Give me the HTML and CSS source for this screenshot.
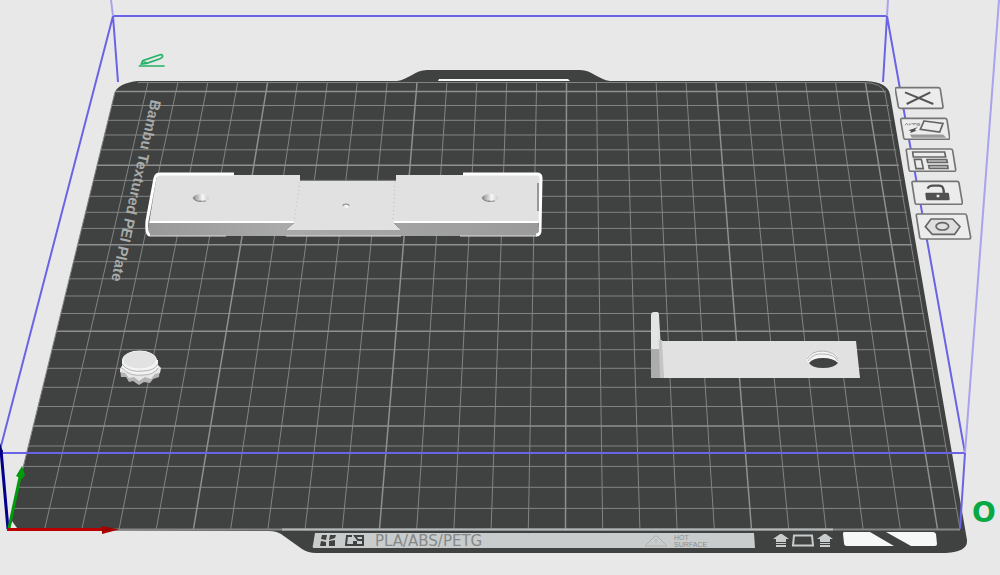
FILE: index.html
```html
<!DOCTYPE html>
<html lang="en">
<head>
    <meta charset="UTF-8">
    <meta name="viewport" content="width=device-width, initial-scale=1.0">
    <title>Build Plate</title>
    <link rel="stylesheet" href="styles.css">
</head>
<body>
    <main class="scene">
        <svg class="view" viewBox="0 0 1000 575" role="img" aria-label="Build plate with parts">
            <defs>
                <clipPath id="gridArea"><path d="M8 530L115 92Q119 83 136 82H864Q884 83 887 94L960 530Z"/></clipPath>
                <linearGradient id="front" x1="0" x2="1">
                    <stop offset="0" stop-color="#999"/>
                    <stop offset=".35" stop-color="#aaa"/>
                    <stop offset="1" stop-color="#9b9b9b"/>
                </linearGradient>
                <linearGradient id="hole" x1="0" x2="1">
                    <stop offset="0" stop-color="#888"/>
                    <stop offset=".6" stop-color="#f8f8f8"/>
                    <stop offset="1" stop-color="#ccc"/>
                </linearGradient>
            </defs>

            <!-- plate -->
            <path class="plate" d="M8 530L115 92Q119 83 138 81H397C408 80 415 70 427 70H580C592 70 599 80 610 81H866Q887 82 890 94L967 540Q968 552 946 553H316Q308 553 302 549L281 534Q276 531 269 531Z"/>
            <path class="cutout" d="M439 79H568L570 81H438Z"/>

            <!-- grid -->
            <g clip-path="url(#gridArea)">
                <path class="grid" d="M147.9 83L44.7 529M177.8 83L81.9 529M207.7 83L119.1 529M237.6 83L156.3 529M297.4 83L230.7 529M327.3 83L267.9 529M357.2 83L305.1 529M387.1 83L342.3 529M446.9 83L416.7 529M476.8 83L453.9 529M506.7 83L491.1 529M536.6 83L528.3 529M596.4 83L602.7 529M626.3 83L639.9 529M656.2 83L677.1 529M686.1 83L714.3 529M745.9 83L788.7 529M775.8 83L825.9 529M805.7 83L863.1 529M835.6 83L900.3 529"/>
                <path class="grid" d="M0 105.5H1000M0 120.3H1000M0 135H1000M0 149.8H1000M0 180.4H1000M0 196.3H1000M0 212.3H1000M0 228.4H1000M0 261.7H1000M0 278.8H1000M0 296H1000M0 313.5H1000M0 349.7H1000M0 368.3H1000M0 387.3H1000M0 406.5H1000M0 446H1000M0 466.4H1000M0 487.3H1000M0 508.4H1000"/>
                <path class="grid bold" d="M267.5 83L193.5 529M417 83L379.5 529M566.5 83L565.5 529M716 83L751.5 529M865.5 83L937.5 529M0 91.4H1000M0 165.2H1000M0 244.7H1000M0 331.3H1000M0 426H1000"/>
            </g>
            <path class="grid" d="M8 529L115 92M138 82.5H864Q882 83 885 93L960 529"/>
            <path class="edge" d="M8 529.5H960"/>
            <path class="edge light" d="M282 529.5H833"/>
            <text class="plate-name" transform="translate(151 99) rotate(102.4)">Bambu Textured PEI Plate</text>

            <!-- front label -->
            <path class="label" d="M315 533H754L755 548H314Q312 548 313 545Z"/>
            <g class="ink">
                <path d="M322 535h5l-1 5-5-1zM330 535h6l-1 3-6 2zM321 541l5 1v4h-6zM329 541l6-1v6h-6z"/>
                <path class="ink-line" d="M352 536H347L346 545H363V536H355L358 540H362"/>
                <path d="M353 541h4v4h-4z"/>
            </g>
            <text class="material" x="375" y="546">PLA/ABS/PETG</text>
            <path class="warn" d="M645 546l10-10h2l10 10zM656 539v4"/>
            <text class="warn-text" x="674" y="540">HOT</text>
            <text class="warn-text" x="674" y="547">SURFACE</text>
            <g class="marks">
                <path d="M780 534h2l7 5h-3v3h-10v-3h-3zM776 543h10v1h-10zM776 545h10v2h-10zM824 534h2l7 5h-3v3h-10v-3h-3zM820 543h10v1h-10zM820 545h10v2h-10z"/>
                <path class="marks-line" d="M794 535.5h18l1 10h-20z"/>
            </g>
            <path class="cutout" d="M844 532H870L894 546H847Q844 546 844 543L843 534Q843 532 844 532ZM886 532H933Q935 532 936 534L937 544Q937 546 935 546H911Z"/>

            <!-- long bracket -->
            <path class="face" d="M157 175L300 175V181H396V175H540V223H394L401 230H286L294 223H149Z"/>
            <path fill="url(#front)" d="M149 223H294L286 230H401L394 223H538V236H149Z"/>
            <path class="shine" d="M150 222H294M394 222H538"/>
            <path class="outline" d="M234 174H160Q156 174 155 178L147 221Q146 235 150 235"/>
            <path class="outline" d="M463 174H537Q541 174 541 178L540 231Q540 235 536 235"/>
            <path class="rim" d="M150 236H226M286 236H401M460 236H537"/>
            <path class="shade-line" d="M538 183V211"/>
            <path class="seam" d="M300 182L294 222M395 182L393 222"/>
            <ellipse fill="url(#hole)" cx="201" cy="198" rx="8" ry="4"/>
            <path class="hole-line" d="M193 197Q195 202 201 201M199 201.500L206 201"/>
            <ellipse fill="url(#hole)" cx="490" cy="198" rx="8" ry="4"/>
            <path class="hole-line" d="M482 197Q484 202 490 201M488 201.500L495 201"/>
            <path class="hole-line" d="M343 206Q342 204 346 204Q350 204 349 206"/>
            <ellipse fill="#f5f5f5" cx="346.500" cy="206.500" rx="2" ry="1.500"/>

            <!-- thumb screw -->
            <path fill="#b4b4b4" d="M120 369L160 369L159 377L153 379L150 383L144 382L139 385L133 381L129 382L126 377L121 377Z"/>
            <path fill="#e6e6e6" d="M120 369l3-5h34l4 4-1 5-5 1-4 5-6-2-6 4-5-4-5 1-4-5-5-1z"/>
            <path fill="#f2f2f2" d="M122 360V369Q130 377 143 375Q154 375 158 368V360Z"/>
            <path class="thread" d="M122 364Q129 373 143 371Q154 371 158 364M122 368Q130 377 143 375Q154 375 158 368"/>
            <ellipse class="screw-top" cx="139.500" cy="360" rx="17" ry="9"/>

            <!-- angle bracket -->
            <path class="face" d="M661 341H856L860 378H662Z"/>
            <path fill="#e3e5e3" d="M651 315Q651 312 654 312H657Q659 312 659 315L661 350H651Z"/>
            <path fill="#acacac" d="M651 349H660L664 378H651Z"/>
            <path fill="#c4c4c4" d="M658 314L659 340H662L664 378H660L659 349Z"/>
            <ellipse fill="#f4f4f4" cx="822.500" cy="359" rx="16" ry="8"/>
            <path class="thread" d="M807 359Q811 351 823 351Q835 352 838 359M808 361Q813 353 823 354Q834 354 838 361"/>
            <path class="plate" d="M809 363Q813 358 823 358Q833 358 838 363Q834 368 823 368Q812 368 809 363Z"/>

            <!-- build volume -->
            <path class="volume" d="M887 16H113L0 450M113 16L118 82M887 16L883 82M887 16L965 453L960 529M0 453H965"/>
            <path class="volume faint" d="M111 0L113 16M888 0L887 16M999 0L965 453"/>

            <!-- axes -->
            <path fill="#e8e8e8" d="M10 528L12 521L17 528Z"/>
            <path class="axis-z" d="M1 450L8 529"/>
            <path fill="#00007a" d="M0 443L3 452H0Z"/>
            <path class="axis-y" d="M9 528L20 477"/>
            <path fill="#009a0b" d="M22 466L25 475L22 479L16 476Z"/>
            <path class="axis-x" d="M7 529.500H104"/>
            <path fill="#a30000" d="M102 526L119 529.500L102 534Z"/>
            <text class="plate-number" x="972" y="522">O</text>
        </svg>

        <button class="tool edit" type="button" aria-label="Edit name">
            <svg viewBox="411 156 90 51">
                <path class="pen" d="M424 192L428 182L478 165Q488 162 488 169Q488 173 480 176L440 190ZM428 184L440 189M416 198H494"/>
            </svg>
        </button>
        <button class="tool close" type="button" aria-label="Remove plate">
            <svg viewBox="105 48 147 72">
                <path class="frame" d="M111 53H234Q240 53 241 58L249 110Q249 115 244 115H121Q116 115 115 110L106 58Q105 53 111 53Z"/>
                <path class="cross" d="M135 67L220 102M211 67L140 102"/>
            </svg>
        </button>
        <button class="tool orient" type="button" aria-label="Auto orient">
            <svg viewBox="120 141 150 69">
                <path class="frame" d="M127 145H255Q260 145 261 150L269 203Q269 208 264 208H137Q132 208 131 203L122 150Q121 145 127 145Z"/>
                <path class="stroke" d="M192 153L249 160L239 186L181 178Z"/>
                <path class="stroke thin" d="M135 166L140 160L144 166M147 160L149 165L155 160M156 161H168M162 161V166M170 161H179V166H171Z"/>
                <path class="solid" d="M145 181L160 176L173 171L164 180L170 182L150 189L153 183Z"/>
                <path class="stroke soft" d="M154 196H248L253 201H157Z"/>
            </svg>
        </button>
        <button class="tool arrange" type="button" aria-label="Arrange">
            <svg viewBox="135 234 156 72">
                <path class="frame" d="M144 237H272Q277 237 278 242L287 299Q287 304 282 304H153Q148 304 147 299L139 242Q138 237 144 237Z"/>
                <path class="stroke" d="M158 246H254L257 261H160ZM163 268H184L190 296H168ZM201 269H260L262 277H203ZM206 287H263L264 295H208Z"/>
            </svg>
        </button>
        <button class="tool lock" type="button" aria-label="Lock plate">
            <svg viewBox="153 330 156 75">
                <path class="frame" d="M161 334H291Q296 334 297 339L307 398Q307 403 302 403H171Q166 403 165 398L156 339Q155 334 161 334Z"/>
                <path class="shackle" d="M203 356Q206 347 219 347H236Q248 347 250 357L252 369"/>
                <path class="solid" fill-rule="evenodd" d="M199 368H263Q267 368 267 372L269 387Q269 391 265 391H202Q198 391 198 387L196 372Q196 368 199 368ZM230 374V382H238V374Z"/>
            </svg>
        </button>
        <button class="tool settings" type="button" aria-label="Plate settings">
            <svg viewBox="165 429 171 81">
                <path class="frame" d="M174 432H314Q319 432 320 437L332 502Q332 507 327 507H185Q180 507 179 502L169 437Q168 432 174 432Z"/>
                <path class="stroke nut" d="M213 447H278L300 470L284 493H217L196 470Z"/>
                <ellipse class="stroke" cx="247" cy="469" rx="19" ry="11"/>
            </svg>
        </button>
    </main>
</body>
</html>
```
FILE: styles.css
```css
body {
    margin: 0;
    background-color: #e8e8e8;
    font-family: "DejaVu Sans", sans-serif;
}

.scene {
    position: relative;
    overflow: hidden;
}

.view {
    display: block;
    width: 100%;
}

/* plate */
.plate {
    fill: #404241;
}

.cutout {
    fill: #f6f7f7;
}

.grid {
    fill: none;
    stroke: #828483;
    stroke-width: 1;
}

.grid.bold {
    stroke: #8e908f;
    stroke-width: 1.5;
}

.edge {
    stroke: #858887;
    stroke-width: 2;
}

.edge.light {
    stroke: #b5b9b9;
}

.plate-name {
    fill: #a9abaa;
    font-family: "Liberation Sans", sans-serif;
    font-size: 15px;
    font-weight: bold;
}

.label {
    fill: #c8cccc;
}

.ink {
    fill: #404241;
}

.ink-line {
    fill: none;
    stroke: #404241;
    stroke-width: 2;
}

.material {
    fill: #858988;
    font-size: 15px;
}

.warn {
    fill: none;
    stroke: #b0b2b2;
}

.warn-text {
    fill: #8b8e8e;
    font-family: "Liberation Sans", sans-serif;
    font-size: 7px;
}

.marks {
    fill: #c8cccc;
}

.marks-line {
    fill: none;
    stroke: #c8cccc;
    stroke-width: 2;
}

/* parts */
.face {
    fill: #e1e1e1;
}

.shine {
    stroke: #fff;
    stroke-width: 2;
}

.outline {
    fill: none;
    stroke: #fff;
    stroke-width: 3;
}

.rim {
    stroke: #ddd;
}

.shade-line {
    stroke: #999;
    stroke-width: 2;
}

.seam {
    stroke: #bbb;
    stroke-dasharray: 1 3;
}

.hole-line {
    fill: none;
    stroke: #888;
}

.thread {
    fill: none;
    stroke: #b4b4b4;
}

.screw-top {
    fill: #e2e2e2;
    stroke: #f7f7f7;
}

/* build volume */
.volume {
    fill: none;
    stroke: #6964e6;
    stroke-width: 2;
}

.volume.faint {
    stroke: #a8a3ee;
}

.axis-x,
.axis-y,
.axis-z {
    stroke-width: 3;
}

.axis-x {
    stroke: #b80000;
}

.axis-y {
    stroke: #009a0b;
}

.axis-z {
    stroke: #00008a;
}

.plate-number {
    fill: #08a845;
    font-size: 28px;
    font-weight: bold;
}

/* plate tools */
.tool {
    position: absolute;
    padding: 0;
    border: none;
    background: none;
    cursor: pointer;
}

.tool svg {
    display: block;
    width: 100%;
}

.tool:hover .frame {
    fill: #fff;
}

.edit {
    left: 13.7%;
    top: 9%;
    width: 3%;
}

.close {
    left: 89.5%;
    top: 15%;
    width: 4.9%;
}

.orient {
    left: 90%;
    top: 20.3%;
    width: 5%;
}

.arrange {
    left: 90.5%;
    top: 25.7%;
    width: 5.2%;
}

.lock {
    left: 91.1%;
    top: 31.3%;
    width: 5.2%;
}

.settings {
    left: 91.5%;
    top: 37%;
    width: 5.7%;
}

.pen {
    fill: none;
    stroke: #22b268;
    stroke-width: 5;
}

.frame {
    fill: #ececec;
    stroke: #757575;
    stroke-width: 5;
}

.cross {
    stroke: #555;
    stroke-width: 6;
}

.stroke {
    fill: none;
    stroke: #666;
    stroke-width: 5;
}

.stroke.thin {
    stroke-width: 2;
}

.stroke.soft {
    stroke: #999;
}

.stroke.nut {
    fill: #dedede;
}

.solid {
    fill: #505050;
}

.shackle {
    fill: none;
    stroke: #505050;
    stroke-width: 7;
}
```
